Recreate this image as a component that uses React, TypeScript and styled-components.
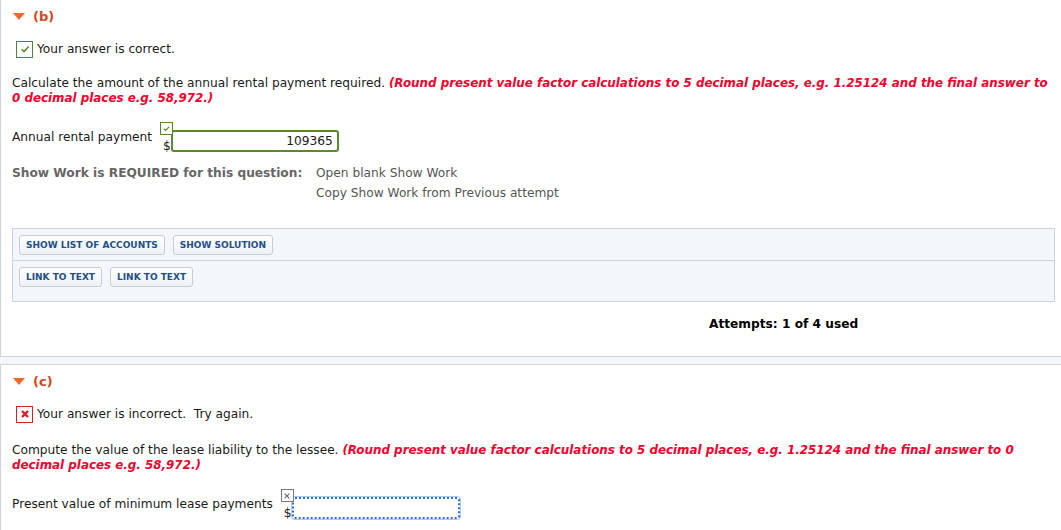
import styled, { createGlobalStyle } from 'styled-components';

const GlobalStyle = createGlobalStyle`
    body {
        margin: 0;
        background: #ffffff;
        font-family: Verdana, "DejaVu Sans", sans-serif;
        font-size: 12.2px;
        color: #1a1a1a;
    }
`;

const Part = styled.section<{ $top?: boolean }>`
    border-left: 1px solid #ccd3dc;
    border-bottom: ${p => (p.$top ? '1px solid #ccd3dc' : 'none')};
    border-top: ${p => (p.$top ? 'none' : '1px solid #ccd3dc')};
    padding: 8px 0 ${p => (p.$top ? '24px' : '20px')} 11px;
`;

const Spacer = styled.div`
    height: 7px;
    background: #f4f7fa;
`;

const PartHeader = styled.div`
    display: flex;
    align-items: center;
    gap: 8px;
    height: 17px;
    font-size: 13px;
    font-weight: bold;
    color: #d6461c;
    margin-left: 1px;
`;

const Triangle = styled.span`
    width: 0;
    height: 0;
    border-left: 6px solid transparent;
    border-right: 6px solid transparent;
    border-top: 7px solid #f0682a;
`;

const Result = styled.div`
    display: flex;
    align-items: center;
    gap: 4px;
    margin: 15px 0 0 4px;
    height: 18px;
`;

const MarkBox = styled.span<{ $kind: 'ok' | 'bad' | 'none'; $size: number }>`
    display: inline-flex;
    align-items: center;
    justify-content: center;
    box-sizing: border-box;
    width: ${p => p.$size}px;
    height: ${p => p.$size}px;
    background: #fff;
    border-style: solid;
    border-width: ${p => (p.$size > 14 ? '1.5px' : '1px')};
    border-color: ${p => (p.$kind === 'ok' ? '#4f8a22' : p.$kind === 'bad' ? '#e01b24' : '#7a7a7a')};
`;

const Question = styled.p<{ $gap: number }>`
    margin: ${p => p.$gap}px 10px 0 0;
    line-height: 15px;
`;

const Hint = styled.span`
    color: #f2002d;
    font-size: 11.9px;
    font-weight: bold;
    font-style: italic;
`;

const AnswerRow = styled.div`
    display: flex;
    align-items: flex-start;
    margin-top: 16px;
`;

const Label = styled.span`
    line-height: 15px;
    margin-top: 8px;
    margin-right: 8px;
`;

const Field = styled.span`
    position: relative;
    display: flex;
    align-items: flex-end;
    padding-top: 8px;
`;

const FieldMark = styled.span`
    position: absolute;
    left: 0;
    top: 0;
    display: flex;
`;

const Dollar = styled.span`
    line-height: 13px;
    margin-bottom: -1px;
    margin-left: 3px;
`;

const Input = styled.input<{ $state: 'ok' | 'focus' }>`
    box-sizing: border-box;
    width: 168px;
    height: 22px;
    font-family: Verdana, "DejaVu Sans", sans-serif;
    font-size: 12.2px;
    text-align: right;
    padding: 0 4px;
    color: #1a1a1a;
    border-radius: 3px;
    outline: none;
    border: ${p => (p.$state === 'ok' ? '2px solid #5b8a2c' : '2px dotted #2e6fd6')};
    box-shadow: ${p => (p.$state === 'focus' ? '0 0 0 1px #a9c8f2' : 'none')};
`;

const WorkGrid = styled.div`
    display: grid;
    grid-template-columns: 304px 1fr;
    row-gap: 5px;
    margin-top: 14px;
    line-height: 15px;
`;

const WorkLabel = styled.span`
    font-weight: bold;
    color: #666666;
    white-space: nowrap;
`;

const WorkLink = styled.span`
    color: #555555;
    grid-column: 2;
`;

const ToolPanel = styled.div`
    margin: 27px 6px 0 0;
    border: 1px solid #cad3de;
    background: #f4f7fa;
`;

const ToolRow = styled.div<{ $last?: boolean }>`
    display: flex;
    gap: 8px;
    padding: 6px 6px ${p => (p.$last ? '14px' : '5px')};
    border-bottom: ${p => (p.$last ? 'none' : '1px solid #cad3de')};
`;

const ToolButton = styled.button`
    height: 20px;
    padding: 0 6px;
    font-family: Verdana, "DejaVu Sans", sans-serif;
    font-size: 9px;
    font-weight: bold;
    color: #234f85;
    background: linear-gradient(#ffffff, #eef1f5);
    border: 1px solid #c6cdd6;
    border-radius: 3px;
`;

const Attempts = styled.div`
    margin-top: 15px;
    font-weight: bold;
    color: #000;
    padding-left: 697px;
    line-height: 15px;
`;

function Check({ size }: { size: number }) {
    const s = size > 14 ? 12 : 9;
    return (
        <svg width={s} height={s} viewBox="0 0 12 12">
            <path d="M2.5 6.3 L5 8.6 L9.6 3.4" fill="none" stroke="#4f8a22" strokeWidth="1.5" />
        </svg>
    );
}

function Cross({ color, size }: { color: string; size: number }) {
    const s = size > 14 ? 10 : 8;
    const w = size > 14 ? 2.4 : 1.3;
    return (
        <svg width={s} height={s} viewBox="0 0 10 10">
            <path d="M2 2 L8 8 M8 2 L2 8" stroke={color} strokeWidth={w} />
        </svg>
    );
}

export default function App() {
    return (
        <>
            <GlobalStyle />
            <Part $top>
                <PartHeader>
                    <Triangle />
                    (b)
                </PartHeader>
                <Result>
                    <MarkBox $kind="ok" $size={17}>
                        <Check size={17} />
                    </MarkBox>
                    Your answer is correct.
                </Result>
                <Question $gap={18}>
                    Calculate the amount of the annual rental payment required.{' '}
                    <Hint>
                        (Round present value factor calculations to 5 decimal places, e.g. 1.25124 and the final
                        answer to 0 decimal places e.g. 58,972.)
                    </Hint>
                </Question>
                <AnswerRow>
                    <Label>Annual rental payment</Label>
                    <Field>
                        <FieldMark>
                            <MarkBox $kind="ok" $size={13}>
                                <Check size={13} />
                            </MarkBox>
                        </FieldMark>
                        <Dollar>$</Dollar>
                        <Input $state="ok" readOnly value="109365" />
                    </Field>
                </AnswerRow>
                <WorkGrid>
                    <WorkLabel>Show Work is REQUIRED for this question:</WorkLabel>
                    <WorkLink>Open blank Show Work</WorkLink>
                    <WorkLink>Copy Show Work from Previous attempt</WorkLink>
                </WorkGrid>
                <ToolPanel>
                    <ToolRow>
                        <ToolButton>SHOW LIST OF ACCOUNTS</ToolButton>
                        <ToolButton>SHOW SOLUTION</ToolButton>
                    </ToolRow>
                    <ToolRow $last>
                        <ToolButton>LINK TO TEXT</ToolButton>
                        <ToolButton>LINK TO TEXT</ToolButton>
                    </ToolRow>
                </ToolPanel>
                <Attempts>Attempts: 1 of 4 used</Attempts>
            </Part>
            <Spacer />
            <Part>
                <PartHeader>
                    <Triangle />
                    (c)
                </PartHeader>
                <Result>
                    <MarkBox $kind="bad" $size={17}>
                        <Cross color="#e01b24" size={17} />
                    </MarkBox>
                    Your answer is incorrect.&nbsp; Try again.
                </Result>
                <Question $gap={20}>
                    Compute the value of the lease liability to the lessee.{' '}
                    <Hint>
                        (Round present value factor calculations to 5 decimal places, e.g. 1.25124 and the final
                        answer to 0 decimal places e.g. 58,972.)
                    </Hint>
                </Question>
                <AnswerRow>
                    <Label>Present value of minimum lease payments</Label>
                    <Field>
                        <FieldMark>
                            <MarkBox $kind="none" $size={13}>
                                <Cross color="#666" size={13} />
                            </MarkBox>
                        </FieldMark>
                        <Dollar>$</Dollar>
                        <Input $state="focus" defaultValue="" />
                    </Field>
                </AnswerRow>
            </Part>
        </>
    );
}
